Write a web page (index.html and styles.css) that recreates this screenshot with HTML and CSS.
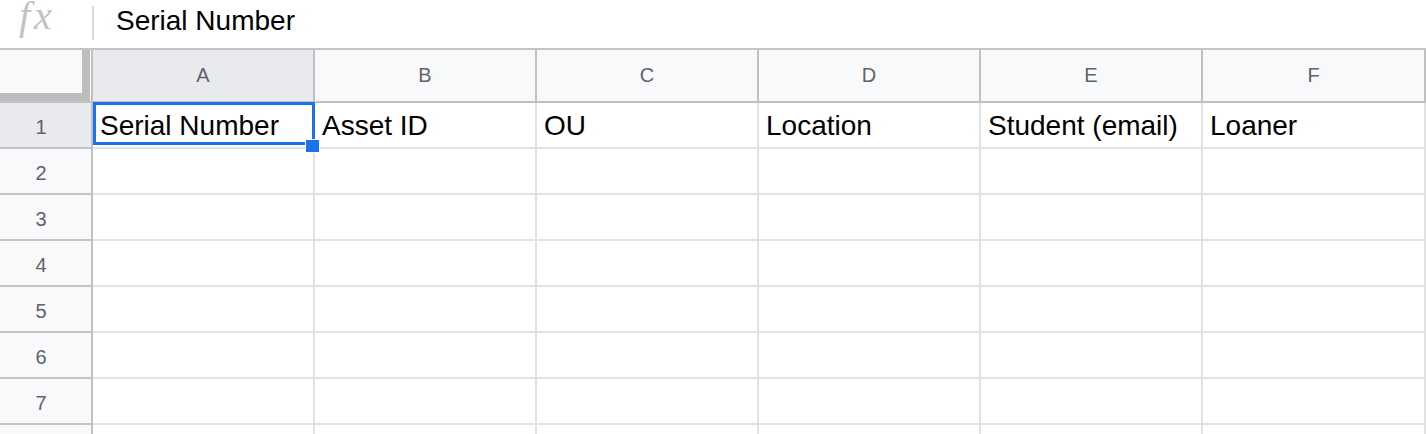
FILE: index.html
```html
<!DOCTYPE html>
<html>
<head>
<meta charset="utf-8">
<link rel="stylesheet" href="styles.css">
</head>
<body>
<div class="formula-bar">
  <span class="fx">fx</span>
  <span class="fsep"></span>
  <span class="formula">Serial Number</span>
</div>
<div class="sheet">
  <div class="corner"><div class="freeze"><div class="corner-in"></div></div></div>
  <div class="colhead sel">A</div>
  <div class="colhead">B</div>
  <div class="colhead">C</div>
  <div class="colhead">D</div>
  <div class="colhead">E</div>
  <div class="colhead">F</div>

  <div class="rowhead sel">1</div>
  <div class="cell active">Serial Number<div class="selection"></div><div class="handle"></div></div>
  <div class="cell">Asset ID</div>
  <div class="cell">OU</div>
  <div class="cell">Location</div>
  <div class="cell">Student (email)</div>
  <div class="cell">Loaner</div>

  <div class="rowhead">2</div>
  <div class="cell"></div><div class="cell"></div><div class="cell"></div><div class="cell"></div><div class="cell"></div><div class="cell"></div>
  <div class="rowhead">3</div>
  <div class="cell"></div><div class="cell"></div><div class="cell"></div><div class="cell"></div><div class="cell"></div><div class="cell"></div>
  <div class="rowhead">4</div>
  <div class="cell"></div><div class="cell"></div><div class="cell"></div><div class="cell"></div><div class="cell"></div><div class="cell"></div>
  <div class="rowhead">5</div>
  <div class="cell"></div><div class="cell"></div><div class="cell"></div><div class="cell"></div><div class="cell"></div><div class="cell"></div>
  <div class="rowhead">6</div>
  <div class="cell"></div><div class="cell"></div><div class="cell"></div><div class="cell"></div><div class="cell"></div><div class="cell"></div>
  <div class="rowhead">7</div>
  <div class="cell"></div><div class="cell"></div><div class="cell"></div><div class="cell"></div><div class="cell"></div><div class="cell"></div>
  <div class="rowhead"></div>
  <div class="cell"></div><div class="cell"></div><div class="cell"></div><div class="cell"></div><div class="cell"></div><div class="cell"></div>
</div>
</body>
</html>
```

FILE: styles.css
```css
html, body {
  margin: 0;
  padding: 0;
  background: #ffffff;
  overflow: hidden;
  width: 1426px;
  height: 434px;
}

body {
  font-family: "Liberation Sans", Arial, sans-serif;
  color: #000;
}

.formula-bar {
  height: 48px;
  border-bottom: 2px solid #c4c4c4;
  display: flex;
  align-items: flex-start;
}

.fx {
  width: 92px;
  box-sizing: border-box;
  padding-left: 19px;
  padding-top: 1px;
  font-family: "Liberation Serif", "Times New Roman", serif;
  font-style: italic;
  font-size: 40px;
  line-height: 30px;
  letter-spacing: 4px;
  color: #c2c2c2;
}

.fsep {
  width: 2px;
  height: 34px;
  margin-top: 6px;
  background: #dadada;
}

.formula {
  margin-left: 22px;
  font-size: 28px;
  line-height: 41px;
  color: #000;
}

.sheet {
  display: grid;
  grid-template-columns: 93px repeat(6, 222px) 1fr;
  grid-template-rows: 53px repeat(8, 46px);
}

.sheet > .cell:nth-child(7n + 7),
.sheet > .colhead:nth-child(7) {
  grid-column-end: span 2;
}

.corner {
  box-sizing: border-box;
  background: #f8f9fa;
  border-right: 2px solid #c0c0c0;
  border-bottom: 2px solid #c0c0c0;
}

.freeze {
  width: 90px;
  height: 51px;
  background: #bdbdbd;
}

.corner-in {
  width: 82px;
  height: 43px;
  background: #f8f9fa;
}

.colhead {
  box-sizing: border-box;
  background: #f8f9fa;
  border-right: 2px solid #c0c0c0;
  border-bottom: 2px solid #c0c0c0;
  text-align: center;
  font-size: 20px;
  line-height: 51px;
  color: #5f6368;
}

.rowhead {
  box-sizing: border-box;
  background: #f8f9fa;
  border-right: 2px solid #c0c0c0;
  border-bottom: 2px solid #c4c4c4;
  text-align: center;
  padding-right: 9px;
  padding-top: 2px;
  font-size: 20px;
  line-height: 44px;
  color: #5f6368;
}

.colhead.sel,
.rowhead.sel {
  background: #e8eaed;
}

.cell {
  box-sizing: border-box;
  border-right: 2px solid #e2e2e2;
  border-bottom: 2px solid #e2e2e2;
  padding-left: 7px;
  padding-top: 1px;
  font-size: 28px;
  line-height: 44px;
  white-space: nowrap;
  color: #000;
}

.cell.active {
  position: relative;
}

.selection {
  position: absolute;
  left: 0;
  right: -2px;
  top: -1px;
  bottom: 2px;
  border: 3px solid #1a73e8;
}

.handle {
  position: absolute;
  left: 213px;
  top: 37px;
  width: 13px;
  height: 12px;
  background: #1a73e8;
  box-shadow: 0 0 0 1px #ffffff;
}
```
